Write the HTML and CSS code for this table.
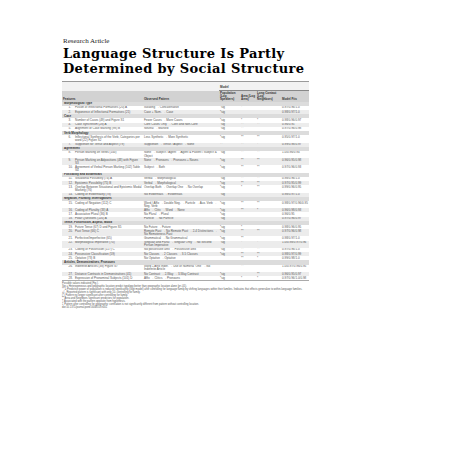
FILE: index.html
```html
<!DOCTYPE html>
<html lang="en">
<head>
<meta charset="utf-8">
<title>Language Structure Is Partly Determined by Social Structure</title>
<link rel="stylesheet" href="styles.css">
</head>
<body>
<div class="page">
  <div class="kicker">Research Article</div>
  <h1 class="title">Language Structure Is Partly<br>Determined by Social Structure</h1>
  <table class="data">
    <colgroup>
      <col class="c-num"><col class="c-feat"><col class="c-obs"><col class="c-pop"><col class="c-area"><col class="c-con"><col class="c-fit">
    </colgroup>
    <thead>
      <tr class="hr-top"><th colspan="3"></th><th colspan="4" class="model">Model</th></tr>
      <tr class="hr-cols">
        <th colspan="2">Features</th>
        <th>Observed Pattern</th>
        <th>Population (Log Speakers)</th>
        <th>Area (Log Area)</th>
        <th>Long Contact (Log Neighbors)</th>
        <th>Model Fits</th>
      </tr>
    </thead>
    <tbody>
      <tr class="sec"><td colspan="7">Morphological Type</td></tr>
      <tr><td class="n">1.</td><td>Fusion of Inflectional Formatives (20) A</td><td>Isolating → Concatenative</td><td>*sig</td><td>*</td><td></td><td>0.97/0.96/1.0</td></tr>
      <tr class="alt"><td class="n">2.</td><td>Exponence of Inflectional Formatives (21)</td><td>Case + Num. → Case</td><td>*sig</td><td></td><td></td><td>0.98/0.97/1.0</td></tr>
      <tr class="sec"><td colspan="7">Case</td></tr>
      <tr><td class="n">3.</td><td>Number of Cases (49) and Figure S1</td><td>Fewer Cases → More Cases</td><td>*sig</td><td>*</td><td>*</td><td>0.98/0.96/0.97</td></tr>
      <tr class="alt"><td class="n">4.</td><td>Case Syncretism (28) A</td><td>Core Cases Only → Core and Non-Core</td><td>*sig</td><td>**</td><td>**</td><td>0.96/0.95</td></tr>
      <tr><td class="n">5.</td><td>Alignment of Case Marking (98) B</td><td>Neutral → Marked</td><td>*sig</td><td>**</td><td></td><td>0.97/0.96/0.98</td></tr>
      <tr class="sec"><td colspan="7">Verb Morphology</td></tr>
      <tr><td class="n">6.</td><td>Inflectional Synthesis of the Verb, Categories per word (22) Figure S2</td><td>Less Synthetic → More Synthetic</td><td>*sig</td><td>**</td><td>**</td><td>0.95/0.97/1.0</td></tr>
      <tr class="alt"><td class="n">7.</td><td>Suppletion for Tense and Aspect (79)</td><td>Suppletion → Tense / Aspect → None</td><td>**</td><td>**</td><td>*</td><td>0.99/0.98/0.97</td></tr>
      <tr class="sec"><td colspan="7">Agreement</td></tr>
      <tr><td class="n">8.</td><td>Person Marking on Verbs (100)</td><td>None → Subject / Agent → Agent &amp; Patient / Subject &amp; Object</td><td>*sig</td><td>**</td><td>**</td><td>1.0/0.96/0.94</td></tr>
      <tr class="alt"><td class="n">9.</td><td>Person Marking on Adpositions (48) with Figure S3</td><td>None → Pronouns → Pronouns + Nouns</td><td>*sig</td><td>**</td><td>**</td><td>0.96/0.95/0.98</td></tr>
      <tr><td class="n">10.</td><td>Agreement of Verbal Person Marking (102) Table S4</td><td>Subject → Both</td><td>*sig</td><td>**</td><td>**</td><td>0.97/0.96/0.93</td></tr>
      <tr class="sec"><td colspan="7">Possibility and Evidentials</td></tr>
      <tr><td class="n">11.</td><td>Situational Possibility (74) A</td><td>Verbal → Morphological</td><td>*sig</td><td>**</td><td>**</td><td>0.98/0.96/1.0</td></tr>
      <tr class="alt"><td class="n">12.</td><td>Epistemic Possibility (75) B</td><td>Verbal → Morphological</td><td>*sig</td><td>**</td><td>**</td><td>0.97/0.95/0.99</td></tr>
      <tr><td class="n">13.</td><td>Overlap Between Situational and Epistemic Modal Marking (76)</td><td>Overlap Both → Overlap One → No Overlap</td><td>*sig</td><td>*</td><td>**</td><td>0.99/0.96/0.95</td></tr>
      <tr class="alt"><td class="n">14.</td><td>Coding of Evidentiality (78)</td><td>No Evidentials → Evidentials</td><td>*sig</td><td></td><td></td><td>0.98/0.97/1.0</td></tr>
      <tr class="sec"><td colspan="7">Negation, Plurality, Interrogatives</td></tr>
      <tr><td class="n">15.</td><td>Coding of Negation (112) C</td><td>Word / Affix → Double Neg. → Particle → Aux. Verb → Neg. Verb</td><td>*sig</td><td>**</td><td>**</td><td>0.98/0.97/0.96/0.95</td></tr>
      <tr class="alt"><td class="n">16.</td><td>Coding of Plurality (33) A</td><td>Affix → Clitic → Word → None</td><td>*sig</td><td>**</td><td>*</td><td>0.96/0.98/0.93</td></tr>
      <tr><td class="n">17.</td><td>Associative Plural (36) B</td><td>No Plural → Plural</td><td>*sig</td><td></td><td></td><td>0.96/0.95</td></tr>
      <tr class="alt"><td class="n">18.</td><td>Polar Questions (116) A</td><td>Particle → No Particle</td><td>*sig</td><td></td><td></td><td>0.97/0.96/0.97</td></tr>
      <tr class="sec"><td colspan="7">Tense, Possession, Aspect, Mood</td></tr>
      <tr><td class="n">19.</td><td>Future Tense (67) D and Figure S5</td><td>No Future → Future</td><td>*sig</td><td>*</td><td></td><td>0.98/0.96/0.95</td></tr>
      <tr class="alt"><td class="n">20.</td><td>Past Tense (66) C</td><td>Remote Past → No Remote Past → 2-4 Distinctions → No Remoteness Past</td><td>*sig</td><td>**</td><td>**</td><td>0.97/0.96/0.98</td></tr>
      <tr><td class="n">21.</td><td>Perfective/Imperfective (65)</td><td>Grammatical → No Grammatical</td><td>*sig</td><td>**</td><td></td><td>0.98/0.97/1.0</td></tr>
      <tr class="alt"><td class="n">22.</td><td>Morphological Imperative (70)</td><td>Singular and Plural → Singular Only → No Second Person Imperative</td><td>*sig</td><td>*</td><td>*</td><td>1.0/0.98/0.97/0.96</td></tr>
      <tr><td class="n">23.</td><td>Coding of Possession (117) C</td><td>No possessive affix → Possessive affix</td><td>*sig</td><td>**</td><td>**</td><td>0.97/0.96/1.0</td></tr>
      <tr class="alt"><td class="n">24.</td><td>Possessive Classification (59)</td><td>No Classes → 2 Classes → 3-5 Classes</td><td>*sig</td><td>**</td><td>**</td><td>0.98/0.97/0.99</td></tr>
      <tr><td class="n">25.</td><td>Optative (73) B</td><td>No Optative → Optative</td><td></td><td>**</td><td>*</td><td>0.99/0.98/1.0</td></tr>
      <tr class="sec"><td colspan="7">Articles, Demonstratives, Pronouns</td></tr>
      <tr><td class="n">26.</td><td>Indefinite Articles (38) Figure S7</td><td>Word + Affix Indef. → Use of Numeral 'One' → No Indefinite Article</td><td></td><td>**</td><td></td><td>1.0/0.97/0.96/0.95</td></tr>
      <tr class="alt"><td class="n">27.</td><td>Distance Contrasts in Demonstratives (41)</td><td>No Contrast → 2-Way → 3-Way Contrast</td><td>*sig</td><td></td><td>**</td><td>0.96/0.95/0.97</td></tr>
      <tr><td class="n">28.</td><td>Expression of Pronominal Subjects (101) D</td><td>Affix → Clitics → Pronouns</td><td>*sig</td><td>*</td><td>*</td><td>0.97/0.96/1.0/0.98</td></tr>
    </tbody>
  </table>
  <div class="notes">
    <p>Possible values indicated (Fig.).</p>
    <p>Sig = Heterogeneous and geographic location predict typology better than geographic location alone (p&lt;.05).</p>
    <p class="wrap">** = Predictive power of population is reduced significantly (logit model) after controlling for language family by shifting languages within their families. Indicates that effects generalize to within-language families.</p>
    <p>+/− Reported pattern is significant with only 10³ controlling for family.</p>
    <p>(*) Pattern no longer significant after controlling for family.</p>
    <p>** Area and Neighbors significant predictors for population.</p>
    <p>† Associated with the pattern opposite from hypothesis.</p>
    <p>‡ Pattern after controlling for geography: correlation is not significantly different from pattern without controlling location.</p>
    <p>doi:10.1371/journal.pone.0008559.t001</p>
  </div>
</div>
</body>
</html>
```

FILE: styles.css
```css
html, body {
  margin: 0;
  padding: 0;
  background: #ffffff;
}

.page {
  width: 248px;
  padding: 37px 0 0 62px;
  color: #000;
}

.kicker {
  font-family: "Liberation Serif", serif;
  font-size: 7px;
  line-height: 8px;
  color: #222;
  margin-left: 1px;
}

.title {
  font-family: "DejaVu Serif", serif;
  font-weight: bold;
  font-size: 13px;
  line-height: 15.1px;
  margin: 1.4px 0 0 1px;
  color: #000;
  letter-spacing: 0.35px;
  white-space: nowrap;
}

.data {
  margin-top: 4.4px;
  width: 247px;
  table-layout: fixed;
  border-collapse: collapse;
  font-family: "Liberation Sans", Arial, sans-serif;
  font-size: 3px;
  line-height: 3.1px;
  color: #555;
  border-top: 1px solid #9a9a9a;
}

.c-num { width: 12px; }
.c-feat { width: 69px; }
.c-obs { width: 76px; }
.c-pop { width: 21px; }
.c-area { width: 16px; }
.c-con { width: 25px; }
.c-fit { width: 28px; }

.data th,
.data td {
  padding: 0.55px 1px;
  text-align: left;
  vertical-align: top;
  overflow: hidden;
}

.data th {
  font-weight: bold;
  color: #333;
}

.hr-top th {
  height: 7px;
  vertical-align: bottom;
  background: #f2f2f2;
}

.hr-top .model {
  border-bottom: 0.5px solid #888;
}

.hr-cols th {
  background: #d2d2d2;
  vertical-align: bottom;
  padding-top: 0.6px;
  padding-bottom: 0.8px;
}

.sec td {
  background: #dcdcdc;
  font-weight: bold;
  color: #333;
  padding-left: 2px;
}

.data td.n {
  padding-left: 6.5px;
  padding-right: 0;
}

.data tr.alt td {
  background: #ececec;
}

.data tbody tr:last-child td {
  border-bottom: 0.5px solid #aaa;
}

.notes {
  margin-top: 2px;
  font-family: "Liberation Sans", Arial, sans-serif;
  font-size: 2.6px;
  line-height: 2.9px;
  color: #555;
}

.notes p {
  margin: 0;
  white-space: nowrap;
}

.notes p.wrap {
  white-space: normal;
}
```
